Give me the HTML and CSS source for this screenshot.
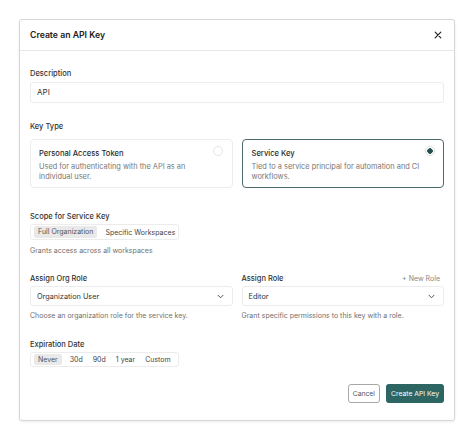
FILE: index.html
```html
<!DOCTYPE html>
<html lang="en">
<head>
  <meta charset="UTF-8">
  <title>Create an API Key</title>
  <link rel="stylesheet" href="styles.css">
</head>
<body>

  <div class="dialog">
    <div class="dialog-header">
      <span class="dialog-title">Create an API Key</span>
      <button class="close-btn" aria-label="Close">
        <svg width="8" height="8" viewBox="0 0 10 10"><path d="M1.5 1.5 L8.5 8.5 M8.5 1.5 L1.5 8.5" stroke="#222" stroke-width="1.5" stroke-linecap="round"/></svg>
      </button>
    </div>

    <div class="dialog-body">
      <div class="field field-first">
        <label class="label">Description</label>
        <div class="input">API</div>
      </div>

      <div class="field field-keytype">
        <label class="label">Key Type</label>
        <div class="cards">
          <div class="card">
            <div class="card-title">Personal Access Token</div>
            <div class="card-desc">Used for authenticating with the API as an individual user.</div>
            <span class="radio"></span>
          </div>
          <div class="card selected">
            <div class="card-title">Service Key</div>
            <div class="card-desc">Tied to a service principal for automation and CI workflows.</div>
            <span class="radio checked"></span>
          </div>
        </div>
      </div>

      <div class="field field-scope">
        <label class="label">Scope for Service Key</label>
        <div class="segmented seg-scope">
          <span class="seg active">Full Organization</span>
          <span class="seg">Specific Workspaces</span>
        </div>
        <div class="help help-scope">Grants access across all workspaces</div>
      </div>

      <div class="row field-roles">
        <div class="col">
          <div class="label-row">
            <label class="label">Assign Org Role</label>
          </div>
          <div class="select">
            <span>Organization User</span>
            <svg width="7" height="5" viewBox="0 0 8 6"><path d="M1 1.5 L4 4.5 L7 1.5" fill="none" stroke="#444" stroke-width="1.1" stroke-linecap="round" stroke-linejoin="round"/></svg>
          </div>
          <div class="help">Choose an organization role for the service key.</div>
        </div>
        <div class="col">
          <div class="label-row">
            <label class="label">Assign Role</label>
            <span class="new-role">+ New Role</span>
          </div>
          <div class="select">
            <span>Editor</span>
            <svg width="7" height="5" viewBox="0 0 8 6"><path d="M1 1.5 L4 4.5 L7 1.5" fill="none" stroke="#444" stroke-width="1.1" stroke-linecap="round" stroke-linejoin="round"/></svg>
          </div>
          <div class="help">Grant specific permissions to this key with a role.</div>
        </div>
      </div>

      <div class="field field-expiry">
        <label class="label">Expiration Date</label>
        <div class="segmented seg-expiry">
          <span class="seg active">Never</span>
          <span class="seg">30d</span>
          <span class="seg">90d</span>
          <span class="seg">1 year</span>
          <span class="seg">Custom</span>
        </div>
      </div>

      <div class="actions">
        <button class="btn btn-cancel">Cancel</button>
        <button class="btn btn-primary">Create API Key</button>
      </div>
    </div>
  </div>

</body>
</html>
```

FILE: styles.css
```css
body {
  margin: 0;
  padding: 19px;
  font-family: 'Inter', 'Noto Sans', sans-serif;
  background: #fff;
  color: #2a2a2a;
}

.dialog {
  width: 434px;
  border: 1px solid #d6d6d6;
  border-radius: 3px;
  background: #fff;
  box-shadow: 0 1px 3px rgba(0, 0, 0, 0.08);
}

.dialog-header {
  height: 30px;
  display: flex;
  align-items: center;
  justify-content: space-between;
  padding: 0 10px;
  border-bottom: 1px solid #e6e6e6;
}

.dialog-title {
  font-size: 8.7px;
  font-weight: 600;
  color: #222;
}

.close-btn {
  border: none;
  background: none;
  padding: 0;
  margin-right: 2px;
  display: flex;
  cursor: pointer;
}

.dialog-body {
  padding: 0 10px 17px;
}

.label {
  display: block;
  font-size: 7.5px;
  font-weight: 500;
  line-height: 10px;
  color: #333;
}

.field-first { padding-top: 18px; }
.field-first .label { margin-bottom: 3px; }

.input {
  height: 19px;
  border: 1px solid #ececec;
  border-radius: 3px;
  padding: 0 6px;
  font-size: 8px;
  line-height: 19px;
  color: #333;
}

.field-keytype { margin-top: 19px; }
.field-keytype .label { margin-bottom: 7px; }

.cards {
  display: grid;
  grid-template-columns: 1fr 1fr;
  gap: 9px;
}

.card {
  position: relative;
  height: 49px;
  box-sizing: border-box;
  border: 1px solid #ececec;
  border-radius: 4px;
  padding: 8px 30px 0 8px;
}

.card.selected {
  border: 1.5px solid #4a6b6a;
  padding: 8px 14px 0 9px;
}

.card-title {
  font-size: 7.6px;
  font-weight: 500;
  line-height: 12px;
  color: #2a2a2a;
  margin-bottom: 2px;
}

.card-desc {
  font-size: 7.4px;
  line-height: 10px;
  color: #777;
}

.radio {
  position: absolute;
  top: 6px;
  right: 9px;
  width: 10px;
  height: 10px;
  box-sizing: border-box;
  border: 1px solid #e4e4e4;
  border-radius: 50%;
}

.card.selected .radio { right: 8px; }

.radio.checked {
  border-color: #dcdcdc;
  background: radial-gradient(circle, #24504f 0 2.5px, #fff 3px);
}

.field-scope { margin-top: 24px; }
.field-scope .label { margin-bottom: 2px; }

.segmented {
  display: flex;
  align-items: center;
  width: 149px;
  box-sizing: border-box;
  border: 1px solid #ececec;
  border-radius: 3px;
  padding: 0 3px;
  white-space: nowrap;
}

.seg-scope { height: 16px; gap: 4px; }
.seg-expiry { height: 15px; gap: 2px; }

.seg {
  font-size: 7px;
  line-height: 11px;
  padding: 0 4px;
  color: #444;
  border-radius: 2px;
}

.seg.active {
  background: #e9e9e9;
  color: #555;
}

.seg-scope .seg.active { line-height: 12px; }
.seg-expiry .seg.active { margin-right: 2px; }

.help {
  font-size: 7px;
  line-height: 10px;
  color: #6f6f6f;
  margin-top: 5px;
}

.help-scope { margin-top: 6px; }

.row {
  display: grid;
  grid-template-columns: 1fr 1fr;
  gap: 9px;
}

.field-roles { margin-top: 18px; }

.label-row {
  display: flex;
  justify-content: space-between;
  align-items: center;
  margin-bottom: 2px;
}

.new-role {
  font-size: 7px;
  line-height: 10px;
  color: #888;
  margin-right: 4px;
}

.select {
  height: 20px;
  box-sizing: border-box;
  border: 1px solid #ececec;
  border-radius: 3px;
  padding: 0 8px 0 6px;
  display: flex;
  align-items: center;
  justify-content: space-between;
  font-size: 7.3px;
  color: #333;
}

.field-expiry { margin-top: 19px; }
.field-expiry .label { margin-bottom: 2px; }

.actions {
  display: flex;
  justify-content: flex-end;
  gap: 6px;
  margin-top: 17px;
}

.btn {
  height: 19px;
  border-radius: 3px;
  font-family: inherit;
  font-size: 6.8px;
  padding: 0 4px;
  cursor: pointer;
}

.btn-cancel {
  border: 1px solid #a8a8a8;
  background: #fff;
  color: #555;
}

.btn-primary {
  border: none;
  background: #2c6562;
  color: #fff;
  padding: 0 5px;
}
```
